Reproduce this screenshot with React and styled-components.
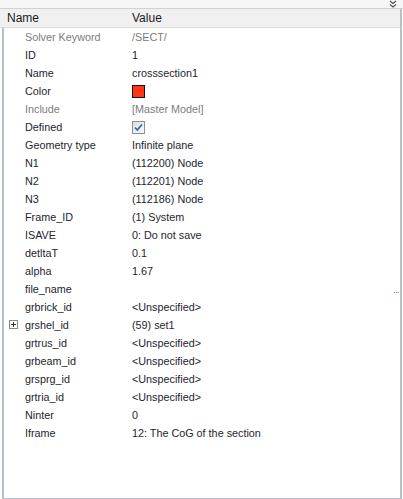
import styled, { createGlobalStyle } from "styled-components";

const Global = createGlobalStyle`
  html, body { margin: 0; padding: 0; background: #fff; }
  body { font-family: "Liberation Sans", Arial, sans-serif; }
`;

const rows = [
  { name: "Solver Keyword", value: "/SECT/", muted: true },
  { name: "ID", value: "1" },
  { name: "Name", value: "crosssection1" },
  { name: "Color", kind: "color" },
  { name: "Include", value: "[Master Model]", muted: true },
  { name: "Defined", kind: "check" },
  { name: "Geometry type", value: "Infinite plane" },
  { name: "N1", value: "(112200) Node" },
  { name: "N2", value: "(112201) Node" },
  { name: "N3", value: "(112186) Node" },
  { name: "Frame_ID", value: "(1) System" },
  { name: "ISAVE", value: "0: Do not save" },
  { name: "detltaT", value: "0.1" },
  { name: "alpha", value: "1.67" },
  { name: "file_name", value: "", browse: true },
  { name: "grbrick_id", value: "<Unspecified>" },
  { name: "grshel_id", value: "(59) set1", expand: true },
  { name: "grtrus_id", value: "<Unspecified>" },
  { name: "grbeam_id", value: "<Unspecified>" },
  { name: "grsprg_id", value: "<Unspecified>" },
  { name: "grtria_id", value: "<Unspecified>" },
  { name: "Ninter", value: "0" },
  { name: "Iframe", value: "12: The CoG of the section" },
];

export default function App() {
  return (
    <Page>
      <Global />
      <TopStrip>
        <Chevron viewBox="0 0 8 8">
          <path d="M1 1 L4 3.5 L7 1 M1 4.5 L4 7 L7 4.5" fill="none" stroke="#555" strokeWidth="1.2" />
        </Chevron>
      </TopStrip>
      <Header>
        <NameCol header>Name</NameCol>
        <ValueCol>Value</ValueCol>
      </Header>
      <Body>
        {rows.map((r) => (
          <Row key={r.name}>
            <NameCol muted={r.muted}>
              {r.expand && (
                <Expander viewBox="0 0 9 9">
                  <rect x="0.5" y="0.5" width="8" height="8" fill="#fff" stroke="#8a8a8a" />
                  <path d="M2 4.5 H7 M4.5 2 V7" stroke="#333" strokeWidth="1" />
                </Expander>
              )}
              {r.name}
            </NameCol>
            <ValueCol muted={r.muted}>
              {r.kind === "color" && <Swatch />}
              {r.kind === "check" && (
                <Check viewBox="0 0 13 13">
                  <defs>
                    <linearGradient id="cb" x1="0" y1="0" x2="1" y2="1">
                      <stop offset="0" stopColor="#dcdcdc" />
                      <stop offset="1" stopColor="#fbfbfb" />
                    </linearGradient>
                  </defs>
                  <rect x="0.5" y="0.5" width="12" height="12" fill="url(#cb)" stroke="#8e8f8f" />
                  <path d="M3 6.5 L5.3 9 L10 3.5" fill="none" stroke="#2a6fb0" strokeWidth="1.8" />
                </Check>
              )}
              {r.value}
            </ValueCol>
            {r.browse && <Browse>...</Browse>}
          </Row>
        ))}
      </Body>
    </Page>
  );
}

const Page = styled.div`
  width: 403px;
  height: 499px;
  display: flex;
  flex-direction: column;
  overflow: hidden;
  background: #fff;
  font-size: 10.8px;
  color: #1e1e2e;
`;

const TopStrip = styled.div`
  height: 8px;
  flex: none;
  background: #f6f6f6;
  border-bottom: 1px solid #cbd2da;
  display: flex;
  justify-content: flex-end;
  align-items: flex-start;
  padding-right: 6px;
`;

const Chevron = styled.svg`
  width: 8px;
  height: 8px;
`;

const Header = styled.div`
  height: 18px;
  flex: none;
  display: flex;
  align-items: center;
  background: #f0f0f0;
  border-bottom: 1px solid #d8d8d8;
  border-right: 2px solid #b7bfca;
  margin-right: 1px;
  padding-left: 4px;
  font-size: 12px;
  color: #1a1a1a;
`;

const Body = styled.div`
  flex: 1;
  margin: 0 1px 0 2px;
  border-left: 2px solid #b7bfca;
  border-right: 2px solid #b7bfca;
  border-bottom: 1px solid #b7bfca;
`;

const Row = styled.div`
  height: 18px;
  display: flex;
  align-items: center;
`;

const NameCol = styled.div`
  width: ${(p) => (p.header ? "125px" : "107px")};
  padding-left: ${(p) => (p.header ? "3px" : "21px")};
  flex: none;
  position: relative;
  display: flex;
  align-items: center;
  white-space: nowrap;
  color: ${(p) => (p.muted ? "#7c7c7c" : "inherit")};
`;

const ValueCol = styled.div`
  flex: 1;
  display: flex;
  align-items: center;
  white-space: nowrap;
  color: ${(p) => (p.muted ? "#7c7c7c" : "inherit")};
`;

const Expander = styled.svg`
  position: absolute;
  left: 5px;
  top: 50%;
  margin-top: -5px;
  width: 9px;
  height: 9px;
`;

const Swatch = styled.span`
  display: inline-block;
  width: 11px;
  height: 11px;
  background: #ff3514;
  border: 1px solid #111;
`;

const Check = styled.svg`
  width: 13px;
  height: 13px;
`;

const Browse = styled.span`
  font-size: 9px;
  color: #b03050;
  letter-spacing: -0.5px;
  padding-right: 1px;
  margin-top: 2px;
`;
